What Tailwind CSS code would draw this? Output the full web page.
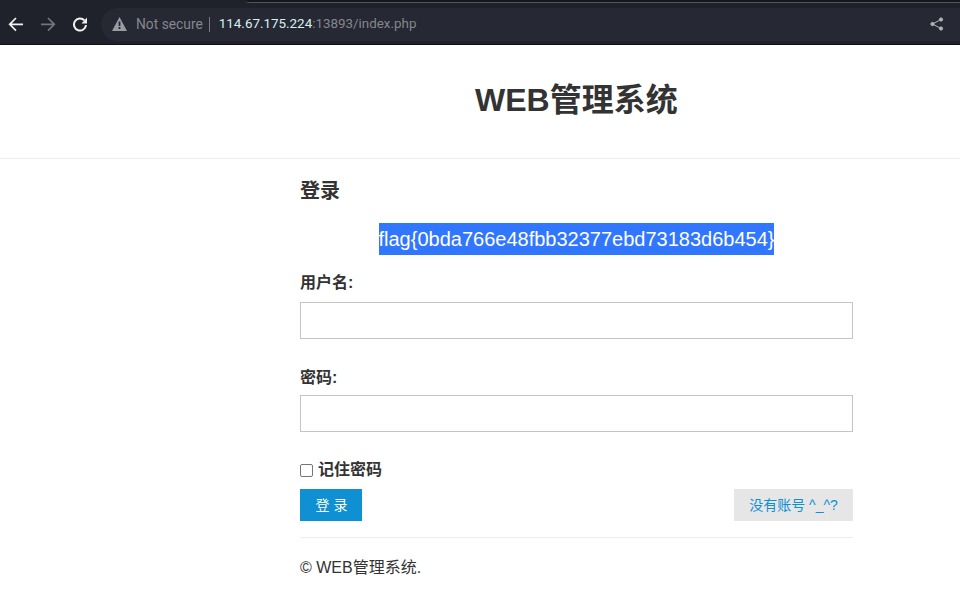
<!DOCTYPE html>
<html>
<head>
<meta charset="utf-8">
<title>WEB管理系统</title>
<script src="https://cdn.jsdelivr.net/npm/@tailwindcss/browser@4"></script>
</head>
<body class="h-screen overflow-hidden bg-white font-['Liberation_Sans','Noto_Sans_CJK_SC',sans-serif] text-[#333]">

  <!-- browser chrome -->
  <div class="h-[45px] bg-[#1f212b] border-b border-[#111] relative">
    <div class="absolute left-[246px] right-0 top-0 h-[3px] bg-[#16171d] border-b border-[#555] rounded-bl"></div>
    <div class="h-[44px] flex items-center pt-[4px]">
      <svg class="ml-[8px] w-4 h-4" viewBox="0 0 16 16" fill="none" stroke="#f2f2f2" stroke-width="1.7"><path d="M15 8.3H2.5M8 2 1.7 8.3l6.3 6.3"/></svg>
      <svg class="ml-[16px] w-4 h-4" viewBox="0 0 16 16" fill="none" stroke="#73757c" stroke-width="1.7"><path d="M1 8.3h12.5M8 2l6.3 6.3L8 14.6"/></svg>
      <svg class="ml-[16px] w-4 h-4" viewBox="0 0 16 16" fill="none" stroke="#f2f2f2" stroke-width="2"><path d="M14 9A6 6 0 1 1 12.3 4.3"/><path d="M15 1.5v6H9.5Z" fill="#f2f2f2" stroke="none"/></svg>
      <div class="ml-[13px] h-[33px] w-[330px] rounded-l-full bg-[#262833] flex items-center pl-[10px] text-[13.5px] font-['Roboto',sans-serif]">
        <svg class="w-[15px] h-[14px] ml-[1px]" viewBox="0 0 15 14" fill="#9a9ca2"><path d="M7.5 0 15 14H0Z"/><path d="M6.6 4.5h1.8v4.5H6.6zM6.6 10h1.8v2H6.6z" fill="#262833"/></svg>
        <span class="ml-[9px] text-[#85878d] text-[13.8px]">Not secure</span>
        <span class="ml-[6px] w-px h-[15px] bg-[#7a7c82]"></span>
        <span class="ml-[9px] text-[13.4px] text-[#d8f0f2]">114.67.175.224<span class="text-[#85878d]">:13893/index.php</span></span>
      </div>
      <div class="flex-1 h-[33px] bg-[#262833] flex items-center justify-end pr-[16px]">
        <svg class="w-[14px] h-[14px]" viewBox="0 0 14 14" fill="#b5b6ba" stroke="#b5b6ba"><circle cx="11" cy="2.5" r="1.6"/><circle cx="2.5" cy="7" r="1.6"/><circle cx="11" cy="11.5" r="1.6"/><path d="M11 2.5 2.5 7l8.5 4.5" fill="none"/></svg>
      </div>
    </div>
  </div>

  <!-- page header -->
  <div class="h-[114px] border-b border-[#eee] pl-[475px] pt-[35px]">
    <h1 class="text-[32px] font-bold leading-[40px] text-[#333]">WEB管理系统</h1>
  </div>

  <!-- login form -->
  <div class="ml-[300px] w-[553px]">
    <h2 class="mt-[20px] text-[20px] font-bold leading-[25px]">登录</h2>
    <div class="mt-[19px] h-[32px] flex justify-center">
      <span class="bg-[#3176ff] text-white text-[20px] leading-[32px] whitespace-nowrap">flag{0bda766e48fbb32377ebd73183d6b454}</span>
    </div>

    <label class="block mt-[18px] text-[16px] font-bold leading-[20px]">用户名:</label>
    <input type="text" class="block mt-[9px] w-full h-[37px] border border-[#c4c4c4] bg-white">

    <label class="block mt-[29px] text-[16px] font-bold leading-[20px]">密码:</label>
    <input type="text" class="block mt-[7px] w-full h-[37px] border border-[#c4c4c4] bg-white">

    <label class="mt-[28px] flex items-center h-[20px] text-[16px] font-bold">
      <input type="checkbox" class="w-[13px] h-[13px] mr-[5px] appearance-none border border-[#767676] rounded-[2px] bg-white">
      记住密码
    </label>

    <div class="mt-[9px] flex justify-between">
      <button class="w-[62px] h-[32px] pl-px bg-[#0e90d2] text-white text-[14px]">登 录</button>
      <a class="w-[119px] h-[32px] bg-[#e6e6e6] text-[#0e90d2] text-[14px] flex items-center justify-center">没有账号 ^_^?</a>
    </div>

    <hr class="mt-[16px] border-[#eee]">
    <p class="mt-[20px] text-[16px] leading-[20px]">© WEB管理系统.</p>
  </div>
</body>
</html>
